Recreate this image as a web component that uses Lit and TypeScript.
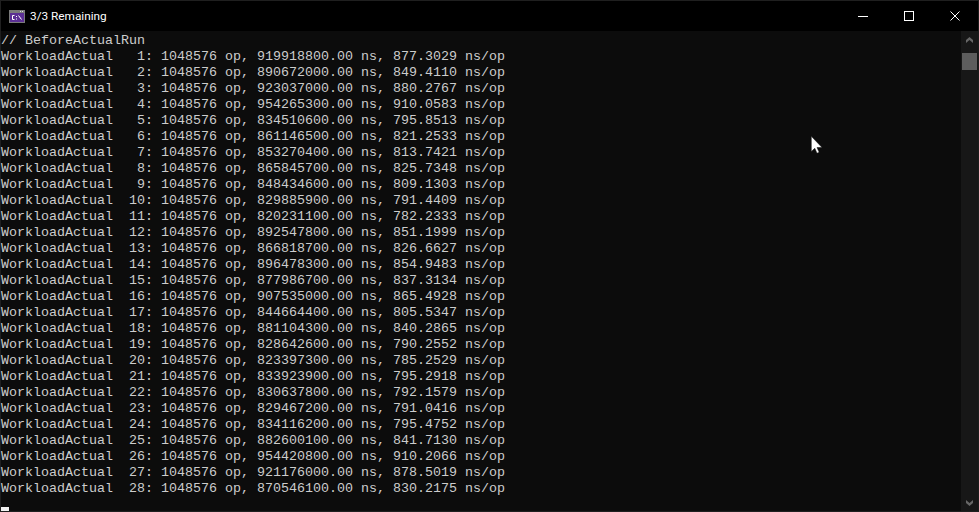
import { LitElement, html, css, svg } from "lit";
import { customElement } from "lit/decorators.js";

const DATA: [string, string][] = [
  ["919918800", "877.3029"], ["890672000", "849.4110"], ["923037000", "880.2767"], ["954265300", "910.0583"],
  ["834510600", "795.8513"], ["861146500", "821.2533"], ["853270400", "813.7421"], ["865845700", "825.7348"],
  ["848434600", "809.1303"], ["829885900", "791.4409"], ["820231100", "782.2333"], ["892547800", "851.1999"],
  ["866818700", "826.6627"], ["896478300", "854.9483"], ["877986700", "837.3134"], ["907535000", "865.4928"],
  ["844664400", "805.5347"], ["881104300", "840.2865"], ["828642600", "790.2552"], ["823397300", "785.2529"],
  ["833923900", "795.2918"], ["830637800", "792.1579"], ["829467200", "791.0416"], ["834116200", "795.4752"],
  ["882600100", "841.7130"], ["954420800", "910.2066"], ["921176000", "878.5019"], ["870546100", "830.2175"],
];

@customElement("app-root")
export class AppRoot extends LitElement {
  static styles = css`
    :host { display: block; width: 979px; height: 512px; position: relative; overflow: hidden; background: #0c0c0c; }
    .window { display: flex; flex-direction: column; height: 512px; box-sizing: border-box; border: 1px solid #1f1f1f; border-right-color: #1c1c1c; }
    .titlebar { display: flex; align-items: center; height: 30px; flex: none; background: #000; color: #fff; font: 11.8px Roboto, "Noto Sans", sans-serif; }
    .app-icon { margin: 0 5px 0 8px; flex: none; display: block; }
    .title { flex: 1; }
    .btn { width: 46px; height: 30px; display: flex; align-items: center; justify-content: center; }
    .btn svg { display: block; }
    .body { flex: 1; display: flex; min-height: 0; }
    .console { flex: 1; padding: 2px 0 0 0; color: #ccc; font: 13.33px/16px "Liberation Mono", monospace; position: relative; }
    .row { height: 16px; white-space: pre; }
    .caret { position: absolute; left: 0; bottom: 0; width: 8px; height: 4px; background: #f2f2f2; }
    .scroll { width: 17px; flex: none; background: #171717; display: flex; flex-direction: column; align-items: center; position: relative; }
    .arrow { height: 17px; flex: none; display: flex; align-items: center; justify-content: center; width: 100%; }
    .thumb { width: 15px; height: 17px; background: #5d5d5d; margin-top: 5px; flex: none; }
    .spacer { flex: 1; }
    .pointer { position: absolute; left: 811px; top: 136px; display: block; }
  `;

  render() {
    return html`
      <div class="window">
        <div class="titlebar">
          <svg class="app-icon" width="16" height="13" viewBox="0 0 16 13">
            <rect x="0" y="0" width="16" height="13" fill="#7a7a7a"/>
            <rect x="1" y="3" width="14" height="9" fill="#5b2f94"/>
            <rect x="11" y="1" width="1" height="1" fill="#ddd"/><rect x="13" y="1" width="1" height="1" fill="#ddd"/>
            <path d="M5.500 5.500H3.500v4h2M7.500 6v1M7.500 8.500v1M9.500 5.500l3 4" fill="none" stroke="#fff" stroke-width="1"/>
          </svg>
          <span class="title">3/3 Remaining</span>
          <div class="btn"><svg width="10" height="10" viewBox="0 0 10 10"><rect x="0" y="5" width="10" height="1" fill="#fff"/></svg></div>
          <div class="btn"><svg width="10" height="10" viewBox="0 0 10 10"><rect x=".5" y=".5" width="9" height="9" fill="none" stroke="#fff"/></svg></div>
          <div class="btn"><svg width="10" height="10" viewBox="0 0 10 10"><path d="M.5 .5l9 9M9.500 .5l-9 9" stroke="#fff" fill="none"/></svg></div>
        </div>
        <div class="body">
          <div class="console">
            <div class="row">// BeforeActualRun</div>
            ${DATA.map(
              ([ns, perOp], i) =>
                html`<div class="row">WorkloadActual  ${String(i + 1).padStart(2, " ")}: 1048576 op, ${ns}.00 ns, ${perOp} ns/op</div>`
            )}
            <div class="caret"></div>
          </div>
          <div class="scroll">
            <div class="arrow">${svg`<svg width="7" height="6" viewBox="0 0 7 6"><path d="M0 6V3L3.500 0 7 3V6L3.500 3z" fill="#676767"/></svg>`}</div>
            <div class="thumb"></div>
            <div class="spacer"></div>
            <div class="arrow">${svg`<svg width="7" height="6" viewBox="0 0 7 6"><path d="M0 0V3L3.500 6 7 3V0L3.500 3z" fill="#676767"/></svg>`}</div>
          </div>
        </div>
      </div>
      <svg class="pointer" width="12" height="18" viewBox="0 0 12 18">
        <path d="M.3 .3V15.500L3.800 12.300 6 17.300 8.200 16.300 6 11.500H11z" fill="#fff" stroke="#111" stroke-width=".5"/>
      </svg>
    `;
  }
}
